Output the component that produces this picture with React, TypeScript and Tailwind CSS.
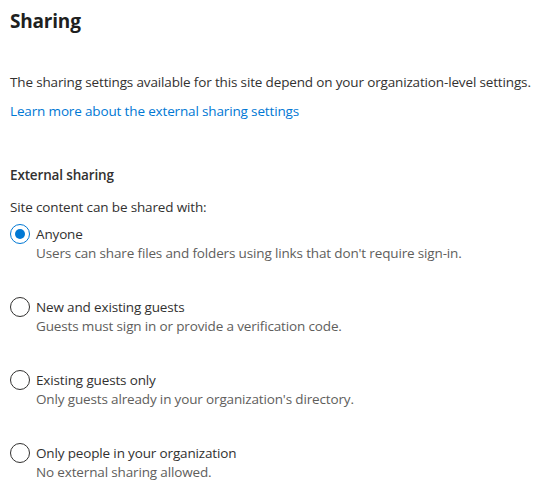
import React, { useState } from "react";

type Option = { id: string; label: string; description: string };

const options: Option[] = [
  {
    id: "anyone",
    label: "Anyone",
    description: "Users can share files and folders using links that don't require sign-in.",
  },
  {
    id: "guests",
    label: "New and existing guests",
    description: "Guests must sign in or provide a verification code.",
  },
  {
    id: "existing",
    label: "Existing guests only",
    description: "Only guests already in your organization's directory.",
  },
  {
    id: "internal",
    label: "Only people in your organization",
    description: "No external sharing allowed.",
  },
];

function Radio({ checked }: { checked: boolean }) {
  return (
    <span
      className={
        checked
          ? "flex h-[20px] w-[20px] shrink-0 items-center justify-center rounded-full border border-[#0078d4] bg-white"
          : "flex h-[20px] w-[20px] shrink-0 items-center justify-center rounded-full border border-[#323130] bg-white"
      }
    >
      {checked && <span className="h-[10px] w-[10px] rounded-full bg-[#0078d4]" />}
    </span>
  );
}

export default function App() {
  const [value, setValue] = useState("anyone");

  return (
    <div
      className="min-h-[495px] w-[542px] bg-white pl-[10px] pt-[7px] text-[13.5px] tracking-[-0.15px] text-[#323130]"
      style={{ fontFamily: '"Open Sans", "Noto Sans", sans-serif' }}
    >
      <h1 className="text-[19px] font-bold leading-[28px] tracking-[-0.2px] text-[#201f1e]">Sharing</h1>

      <p className="mt-[37px] leading-[20px]">
        The sharing settings available for this site depend on your organization-level settings.
      </p>
      <a href="#" className="mt-[9px] block leading-[20px] text-[#0078d4]">
        Learn more about the external sharing settings
      </a>

      <h2 className="mt-[44px] font-semibold leading-[20px]">External sharing</h2>
      <p className="mt-[12px] leading-[20px]">Site content can be shared with:</p>

      <div className="mt-[7px] flex flex-col gap-[34px]">
        {options.map((o) => (
          <label
            key={o.id}
            className="flex cursor-pointer flex-col"
            onClick={() => setValue(o.id)}
          >
            <span className="flex items-center gap-[6px] leading-[20px]">
              <Radio checked={value === o.id} />
              {o.label}
            </span>
            <span className="pl-[26px] leading-[19px] text-[#605e5c]">{o.description}</span>
          </label>
        ))}
      </div>
    </div>
  );
}
